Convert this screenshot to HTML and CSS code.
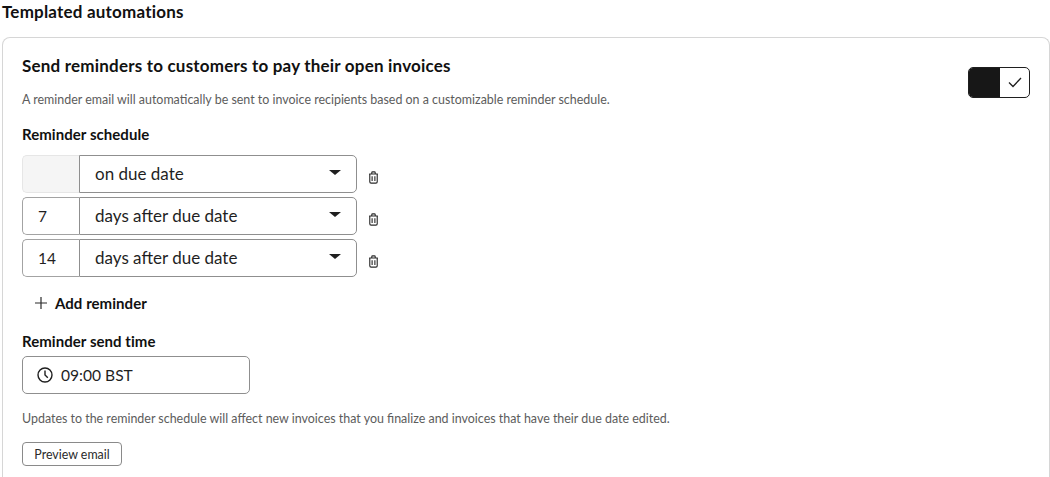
FILE: index.html
```html
<!DOCTYPE html>
<html lang="en">
<head>
<meta charset="utf-8">
<title>Templated automations</title>
<link rel="stylesheet" href="styles.css">
</head>
<body>
<main class="page">
  <h1 class="page-title">Templated automations</h1>
  <section class="card">
    <div class="card-head">
      <div>
        <h2 class="card-title">Send reminders to customers to pay their open invoices</h2>
        <p class="desc">A reminder email will automatically be sent to invoice recipients based on a customizable reminder schedule.</p>
      </div>
      <div class="toggle">
        <span class="toggle-on"></span>
        <span class="toggle-knob">
          <svg width="14" height="11" viewBox="0 0 14 11"><path d="M1 5.5 5 9.5l8-8.5" fill="none" stroke="#1f1f1f" stroke-width="1.3"/></svg>
        </span>
      </div>
    </div>
    <h3 class="label schedule-label">Reminder schedule</h3>
    <div class="rows">
      <div class="row">
        <div class="combo">
          <span class="num num-disabled"></span>
          <span class="select">on due date<i class="caret"></i></span>
        </div>
        <svg class="trash" width="11" height="13" viewBox="0 0 12 15"><g fill="none" stroke="#2a2a2a" stroke-width="1.3"><path d="M1 3.5h10M4 3.3V2q0-1 1-1h2q1 0 1 1v1.3"/><path d="M1.7 3.5v9q0 1.5 1.5 1.5h5.6q1.5 0 1.5-1.5v-9"/><path d="M4.4 6.2v5.2M7.6 6.2v5.2"/></g></svg>
      </div>
      <div class="row">
        <div class="combo">
          <span class="num">7</span>
          <span class="select">days after due date<i class="caret"></i></span>
        </div>
        <svg class="trash" width="11" height="13" viewBox="0 0 12 15"><g fill="none" stroke="#2a2a2a" stroke-width="1.3"><path d="M1 3.5h10M4 3.3V2q0-1 1-1h2q1 0 1 1v1.3"/><path d="M1.7 3.5v9q0 1.5 1.5 1.5h5.6q1.5 0 1.5-1.5v-9"/><path d="M4.4 6.2v5.2M7.6 6.2v5.2"/></g></svg>
      </div>
      <div class="row">
        <div class="combo">
          <span class="num">14</span>
          <span class="select">days after due date<i class="caret"></i></span>
        </div>
        <svg class="trash" width="11" height="13" viewBox="0 0 12 15"><g fill="none" stroke="#2a2a2a" stroke-width="1.3"><path d="M1 3.5h10M4 3.3V2q0-1 1-1h2q1 0 1 1v1.3"/><path d="M1.7 3.5v9q0 1.5 1.5 1.5h5.6q1.5 0 1.5-1.5v-9"/><path d="M4.4 6.2v5.2M7.6 6.2v5.2"/></g></svg>
      </div>
    </div>
    <div class="add">
      <svg width="12" height="12" viewBox="0 0 12 12"><path d="M6 0v12M0 6h12" stroke="#2a2a2a" stroke-width="1.2" fill="none"/></svg>
      <span>Add reminder</span>
    </div>
    <h3 class="label time-label">Reminder send time</h3>
    <div class="time">
      <svg width="16" height="16" viewBox="0 0 16 16"><g fill="none" stroke="#1f1f1f" stroke-width="1.4"><circle cx="8" cy="8" r="7"/><path d="M8 3.6V8l2.8 2.8"/></g></svg>
      <span>09:00 BST</span>
    </div>
    <p class="desc note">Updates to the reminder schedule will affect new invoices that you finalize and invoices that have their due date edited.</p>
    <button class="preview" type="button">Preview email</button>
  </section>
</main>
</body>
</html>
```
FILE: styles.css
```css
* { box-sizing: border-box; }
html, body { margin: 0; padding: 0; height: 477px; overflow: hidden; background: #fff; }
body { font-family: Lato, "Noto Sans", sans-serif; color: #1f1f1f; }
.page { padding: 0 0 0 2px; }
.page-title { margin: 0; padding-top: 2px; height: 37px; font-size: 17px; line-height: 20px; font-weight: 700; letter-spacing: 0.2px; color: #111; }
.card { border: 1px solid #d6d6d6; border-bottom: 0; border-radius: 8px 8px 0 0; height: 440px; padding: 0 19px; }
.card-head { display: flex; justify-content: space-between; }
.card-title { margin: 17px 0 0; font-size: 17px; line-height: 22px; font-weight: 700; letter-spacing: 0.2px; color: #111; }
.desc { margin: 14px 0 0; font-size: 12.45px; line-height: 18px; color: #5c5c5c; }
.toggle { display: flex; width: 62px; height: 31px; margin-top: 29px; border: 1px solid #1f1f1f; border-radius: 5px; overflow: hidden; }
.toggle-on { width: 31px; background: #171717; }
.toggle-knob { flex: 1; display: flex; align-items: center; justify-content: center; }
.label { margin: 0; font-size: 15px; line-height: 20px; font-weight: 700; letter-spacing: 0.05px; color: #111; }
.schedule-label { margin-top: 15px; }
.rows { display: flex; flex-direction: column; gap: 4px; margin-top: 11px; }
.row { display: flex; align-items: center; gap: 10px; }
.combo { display: flex; width: 335px; height: 38px; font-size: 17px; }
.num { width: 57px; padding-left: 15px; font-size: 15.5px; line-height: 36px; border: 1px solid #a3a3a3; border-right: 0; border-radius: 5px 0 0 5px; }
.num-disabled { background: #f5f5f5; border-color: #e6e6e6; }
.select { flex: 1; position: relative; padding-left: 15px; line-height: 36px; border: 1px solid #8f8f8f; border-radius: 0 5px 5px 0; }
.caret { position: absolute; right: 15px; top: 13.5px; border-left: 6px solid transparent; border-right: 6px solid transparent; border-top: 5px solid #1f1f1f; }
.trash { margin: 6px 0 0 1px; }
.add { display: flex; align-items: center; gap: 8px; margin: 16px 0 0 13px; height: 20px; font-size: 15px; font-weight: 700; letter-spacing: 0.05px; color: #111; }
.time-label { margin-top: 18px; }
.time { display: flex; align-items: center; gap: 8px; width: 228px; height: 38px; margin-top: 5px; padding-left: 14px; border: 1px solid #8f8f8f; border-radius: 5px; font-size: 15.6px; }
.note { margin-top: 16px; }
.preview { display: block; width: 100px; height: 24px; margin-top: 14px; padding: 0; background: #fff; border: 1px solid #8a8a8a; border-radius: 4px; font: 12.4px Lato, sans-serif; color: #2a2a2a; }
```
